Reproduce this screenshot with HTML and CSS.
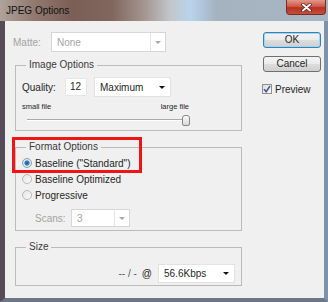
FILE: index.html
```html
<!DOCTYPE html>
<html lang="en">
  <head>
    <meta charset="UTF-8" />
    <title>JPEG Options</title>
    <link rel="stylesheet" href="styles.css">
  </head>
  <body>
    <div class="window">
      <div class="titlebar">
        <span class="title">JPEG Options</span>
        <span class="close">
          <svg width="11" height="9" viewBox="0 0 11 9">
            <path d="M2 1.5 L9 7.5 M9 1.5 L2 7.5" stroke="#5a1d17" stroke-width="3.4" stroke-linecap="round" />
            <path d="M2 1.5 L9 7.5 M9 1.5 L2 7.5" stroke="#fff" stroke-width="2" stroke-linecap="round" />
          </svg>
        </span>
      </div>
      <div class="frame">
        <div class="client">
          <div class="main">
            <div class="matte-row">
              <span class="matte-label disabled">Matte:</span>
              <div class="select select-disabled matte-select">
                <span class="select-text">None</span>
                <span class="select-btn"><span class="arrow"></span></span>
              </div>
            </div>

            <fieldset class="group image-group">
              <legend>Image Options</legend>
              <div class="quality-row">
                <span class="quality-label">Quality:</span>
                <div class="text-input">12</div>
                <div class="select quality-select">
                  <span class="select-text">Maximum</span>
                  <span class="arrow dark"></span>
                </div>
              </div>
              <div class="slider-labels">
                <span>small file</span>
                <span>large file</span>
              </div>
              <div class="slider">
                <div class="track"></div>
                <div class="thumb"></div>
              </div>
            </fieldset>

            <fieldset class="group format-group">
              <legend>Format Options</legend>
              <div class="radio-row">
                <span class="radio checked"></span>
                <span>Baseline (&quot;Standard&quot;)</span>
              </div>
              <div class="radio-row">
                <span class="radio"></span>
                <span>Baseline Optimized</span>
              </div>
              <div class="radio-row">
                <span class="radio"></span>
                <span>Progressive</span>
              </div>
              <div class="scans-row">
                <span class="scans-label disabled">Scans:</span>
                <div class="select select-disabled scans-select">
                  <span class="select-text">3</span>
                  <span class="select-btn"><span class="arrow"></span></span>
                </div>
              </div>
            </fieldset>

            <fieldset class="group size-group">
              <legend>Size</legend>
              <div class="size-row">
                <span class="size-value">-- / -</span>
                <span class="at">@</span>
                <div class="select speed-select">
                  <span class="select-text">56.6Kbps</span>
                  <span class="arrow dark"></span>
                </div>
              </div>
            </fieldset>
          </div>

          <div class="side">
            <div class="button default">OK</div>
            <div class="button">Cancel</div>
            <div class="check-row">
              <span class="checkbox">
                <svg width="8" height="8" viewBox="0 0 8 8">
                  <path d="M1 4.2 L3.2 6.6 L7 1" fill="none" stroke="#3f5ea0" stroke-width="1.6" />
                </svg>
              </span>
              <span>Preview</span>
            </div>
          </div>

          <div class="highlight"></div>
        </div>
      </div>
    </div>
  </body>
</html>
```

FILE: styles.css
```css
body {
  margin: 0;
  font-family: "Liberation Sans", Arial, sans-serif;
  font-size: 10px;
  color: #262626;
}

.window {
  width: 328px;
  height: 302px;
  display: flex;
  flex-direction: column;
  overflow: hidden;
}

.titlebar {
  height: 21px;
  display: flex;
  align-items: flex-start;
  background: linear-gradient(90deg, #aea39c 0, #927a70 10%, #7b5f56 22%, #80665d 34%, #a49690 44%, #c2c6cb 52%, #b9d4ec 58%, #b0c8de 61%, #a5b2c0 66%, #a8b6c4 100%);
}

.title {
  padding: 5px 0 0 6px;
  font-size: 10px;
  line-height: 12px;
  color: #111;
}

.close {
  margin-left: auto;
  margin-right: 2px;
  width: 38px;
  height: 14px;
  border: 1px solid #7a2b24;
  border-top: none;
  border-radius: 0 0 4px 4px;
  background: linear-gradient(#e3978b, #cf5a49 45%, #b8301f 55%, #c4503e);
  display: flex;
  align-items: center;
  justify-content: center;
}

.frame {
  flex: 1;
  display: flex;
  border-left: 5px solid #554c58;
  border-right: 4px solid #7d93a8;
  border-bottom: 4px solid #6e7786;
}

.client {
  flex: 1;
  display: flex;
  position: relative;
  background-color: #f0f0f0;
}

.main {
  width: 234px;
  padding: 11px 0 0 8px;
}

.disabled {
  color: #a3a3a3;
}

.matte-row {
  display: flex;
  align-items: center;
  height: 20px;
}

.matte-label {
  width: 38px;
}

.select {
  display: flex;
  align-items: center;
  box-sizing: border-box;
  background-color: white;
  border: 1px solid #e2e2e2;
}

.select-text {
  flex: 1;
  padding-left: 5px;
}

.select-disabled {
  border-color: #d6d6d6;
  color: #a3a3a3;
}

.select-btn {
  width: 14px;
  align-self: stretch;
  border-left: 1px solid #e4e4e4;
  display: flex;
  align-items: center;
  justify-content: center;
}

.arrow {
  width: 0;
  height: 0;
  border-left: 3px solid transparent;
  border-right: 3px solid transparent;
  border-top: 3px solid #a8a8a8;
}

.arrow.dark {
  border-top-color: #111;
  margin-right: 5px;
}

.matte-select {
  width: 115px;
  height: 20px;
}

.group {
  box-sizing: border-box;
  width: 227px;
  margin: 0 0 0 2px;
  border: 1px solid #bbbbbb;
  padding: 5px 6px 4px;
}

.group legend {
  margin-left: 4px;
  padding: 0 3px;
  line-height: 14px;
  color: #3a3a3a;
}

.image-group {
  margin-top: 6px;
}

.quality-row {
  display: flex;
  align-items: center;
  height: 20px;
}

.quality-label {
  width: 43px;
}

.text-input {
  box-sizing: border-box;
  width: 22px;
  height: 18px;
  line-height: 16px;
  padding-left: 4px;
  background-color: white;
  border: 1px solid #e6e6e6;
}

.quality-select {
  width: 77px;
  height: 20px;
  margin-left: 7px;
}

.slider-labels {
  display: flex;
  justify-content: space-between;
  width: 167px;
  margin-top: 5px;
  font-size: 7.5px;
  line-height: 10px;
}

.slider {
  display: flex;
  align-items: center;
  width: 168px;
  height: 12px;
  margin-top: 2px;
}

.track {
  flex: 1;
  height: 1px;
  margin-left: 5px;
  background-color: #a9a9a9;
  border-bottom: 1px solid #fff;
}

.thumb {
  box-sizing: border-box;
  width: 8px;
  height: 11px;
  margin-left: -4px;
  border: 1px solid #888;
  border-radius: 3px 3px 2px 2px;
  background: linear-gradient(#fafafa, #d9d9d9);
}

.format-group {
  margin-top: 9px;
  padding-top: 1px;
  padding-bottom: 3px;
}

.radio-row {
  display: flex;
  align-items: center;
  height: 16px;
}

.radio {
  box-sizing: border-box;
  width: 10px;
  height: 10px;
  margin-right: 3px;
  border: 1px solid #b9b9b9;
  border-radius: 50%;
  background: linear-gradient(135deg, #e2e2e2, #fdfdfd);
}

.radio.checked {
  border-color: #8aa1b6;
  background: radial-gradient(circle, #1d5d96 0, #3b82bd 2.2px, #dfe7ee 3px);
}

.scans-row {
  display: flex;
  align-items: center;
  height: 18px;
  margin-top: 6px;
  padding-left: 13px;
}

.scans-label {
  width: 36px;
}

.scans-select {
  width: 59px;
  height: 18px;
}

.size-group {
  margin-top: 9px;
  padding-top: 10px;
  padding-bottom: 2px;
}

.size-row {
  display: flex;
  align-items: center;
  justify-content: flex-end;
  height: 19px;
}

.size-value {
  margin-right: 5px;
  color: #555;
}

.at {
  margin-right: 6px;
}

.speed-select {
  width: 77px;
  height: 19px;
}

.side {
  width: 58px;
  margin-left: 16px;
  padding-top: 11px;
}

.button {
  box-sizing: border-box;
  height: 16px;
  line-height: 14px;
  text-align: center;
  border: 1px solid #707070;
  border-radius: 3px;
  background: linear-gradient(#f3f3f3, #ebebeb 50%, #dddddd 50%, #cfcfcf);
}

.button + .button {
  margin-top: 8px;
}

.button.default {
  border-color: #3c7fb1;
  box-shadow: inset 0 0 0 1px #9ad6f5;
}

.check-row {
  display: flex;
  align-items: center;
  height: 12px;
  margin-top: 11px;
  margin-left: -1px;
}

.checkbox {
  box-sizing: border-box;
  width: 10px;
  height: 10px;
  margin-right: 3px;
  border: 1px solid #8e8f8f;
  background: linear-gradient(135deg, #dcdcdc, #fbfbfb);
  display: flex;
  align-items: center;
  justify-content: center;
}

.highlight {
  position: absolute;
  left: 7px;
  top: 116px;
  width: 130px;
  height: 36px;
  box-sizing: border-box;
  border: 3px solid #f01414;
}
```
